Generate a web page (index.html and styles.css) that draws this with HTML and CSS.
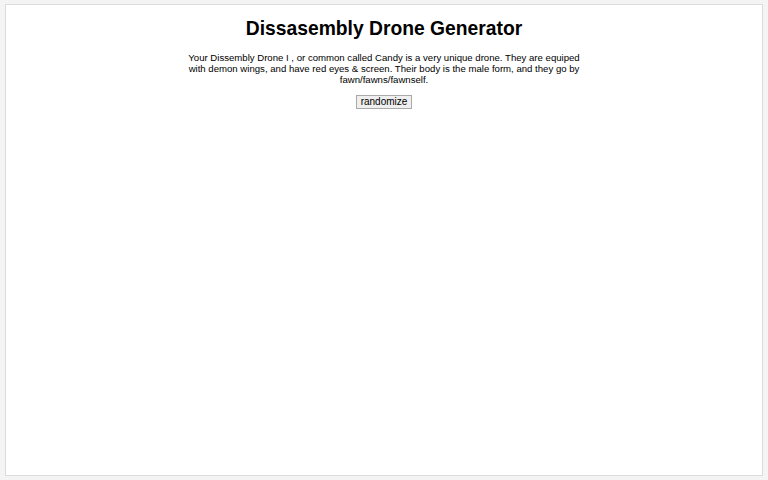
FILE: index.html
```html
<!DOCTYPE html>
<html lang="en">
<head>
  <meta charset="UTF-8">
  <title>Dissasembly Drone Generator</title>
  <link rel="stylesheet" href="styles.css">
</head>
<body>
  <div class="card">
    <h1>Dissasembly Drone Generator</h1>
    <p id="drone">Your Dissembly Drone I , or common called Candy is a very unique drone. They are equiped with demon wings, and have red eyes &amp; screen. Their body is the male form, and they go by fawn/fawns/fawnself.</p>
    <button>randomize</button>
  </div>
</body>
</html>
```

FILE: styles.css
```css
body {
  margin: 0;
  padding: 4px 5px;
  background: #f4f4f4;
  font-family: "Liberation Sans", Arial, sans-serif;
  color: black;
}

.card {
  height: 472px;
  box-sizing: border-box;
  background: white;
  border: 1px solid #dcdcdc;
  text-align: center;
  padding-top: 13px;
}

h1 {
  font-size: 19.3px;
  line-height: 22px;
  margin: 0 0 12px;
}

p {
  font-size: 9.6px;
  line-height: 11px;
  max-width: 394px;
  margin: 0 auto 10px;
}

button {
  display: block;
  margin: 0 auto;
  font-family: "Liberation Sans", Arial, sans-serif;
  font-size: 10px;
  line-height: 12px;
  padding: 0 4px;
  background: #efefef;
  border: 1px solid #a9a9a9;
  border-radius: 0;
  color: black;
}
```
